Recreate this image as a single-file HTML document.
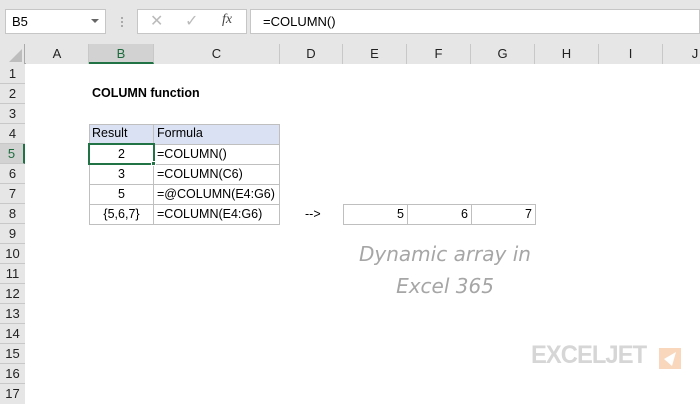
<!DOCTYPE html>
<html><head><style>
*{margin:0;padding:0;box-sizing:border-box}
body{width:700px;height:400px;overflow:hidden;background:#fff;font-family:"Liberation Sans",Calibri,sans-serif;font-size:12.5px;color:#000;position:relative}
.a{position:absolute}
.hdr{position:absolute;background:#e6e6e6;color:#222;text-align:center;font-size:13px}
.cell{position:absolute;height:20px;line-height:19px;padding:0 3px;white-space:nowrap}
</style></head><body>
<div class="a" style="left:0;top:0;width:700px;height:44px;background:#e6e6e6"></div>
<div class="a" style="left:5px;top:9px;width:101px;height:25px;background:#fff;border:1px solid #c6c6c6;padding:4px 6px;font-size:13px">B5</div>
<div class="a" style="left:91px;top:19px;width:0;height:0;border-left:4px solid transparent;border-right:4px solid transparent;border-top:4px solid #666"></div>
<div class="a" style="left:121px;top:17px;width:2px;height:2px;background:#aaa;box-shadow:0 4px #aaa,0 8px #aaa"></div>
<div class="a" style="left:137px;top:9px;width:110px;height:25px;background:#fff;border:1px solid #c6c6c6"></div>
<div class="a" style="left:150px;top:11px;font-size:16px;color:#bbb">✕</div>
<div class="a" style="left:185px;top:11px;font-size:16px;color:#bbb">✓</div>
<div class="a" style="left:222px;top:12px;font-size:14px;font-style:italic;font-family:'Liberation Serif',serif;color:#444">fx</div>
<div class="a" style="left:250px;top:9px;width:450px;height:25px;background:#fff;border:1px solid #c6c6c6;padding:4px 12px;font-size:13px">=COLUMN()</div>

<div class="a" style="left:0;top:44px;width:700px;height:20px;background:#e6e6e6;border-bottom:1px solid #aaa"></div>
<div class="a" style="left:0;top:44px;width:25px;height:356px;background:#e6e6e6;border-right:1px solid #aaa"></div>
<div class="a" style="left:9px;top:49px;width:0;height:0;border-left:13px solid transparent;border-bottom:13px solid #bdbdbd"></div>
<div class="hdr" style="left:26px;top:44px;width:63px;height:20px;line-height:20px;border-right:1px solid #c8c8c8">A</div>
<div class="hdr" style="left:89px;top:44px;width:65px;height:20px;line-height:20px;border-right:1px solid #c8c8c8;background:#d2d2d2;color:#1e6b3e;border-bottom:2px solid #217346">B</div>
<div class="hdr" style="left:154px;top:44px;width:126px;height:20px;line-height:20px;border-right:1px solid #c8c8c8">C</div>
<div class="hdr" style="left:280px;top:44px;width:63px;height:20px;line-height:20px;border-right:1px solid #c8c8c8">D</div>
<div class="hdr" style="left:343px;top:44px;width:64px;height:20px;line-height:20px;border-right:1px solid #c8c8c8">E</div>
<div class="hdr" style="left:407px;top:44px;width:64px;height:20px;line-height:20px;border-right:1px solid #c8c8c8">F</div>
<div class="hdr" style="left:471px;top:44px;width:64px;height:20px;line-height:20px;border-right:1px solid #c8c8c8">G</div>
<div class="hdr" style="left:535px;top:44px;width:64px;height:20px;line-height:20px;border-right:1px solid #c8c8c8">H</div>
<div class="hdr" style="left:599px;top:44px;width:64px;height:20px;line-height:20px;border-right:1px solid #c8c8c8">I</div>
<div class="hdr" style="left:663px;top:44px;width:64px;height:20px;line-height:20px">J</div>

<div class="hdr" style="left:0;top:64px;width:25px;height:20px;line-height:20px;border-bottom:1px solid #c8c8c8">1</div>
<div class="hdr" style="left:0;top:84px;width:25px;height:20px;line-height:20px;border-bottom:1px solid #c8c8c8">2</div>
<div class="hdr" style="left:0;top:104px;width:25px;height:20px;line-height:20px;border-bottom:1px solid #c8c8c8">3</div>
<div class="hdr" style="left:0;top:124px;width:25px;height:20px;line-height:20px;border-bottom:1px solid #c8c8c8">4</div>
<div class="hdr" style="left:0;top:144px;width:25px;height:20px;line-height:20px;border-bottom:1px solid #c8c8c8;background:#d2d2d2;color:#1e6b3e;border-right:2px solid #217346">5</div>
<div class="hdr" style="left:0;top:164px;width:25px;height:20px;line-height:20px;border-bottom:1px solid #c8c8c8">6</div>
<div class="hdr" style="left:0;top:184px;width:25px;height:20px;line-height:20px;border-bottom:1px solid #c8c8c8">7</div>
<div class="hdr" style="left:0;top:204px;width:25px;height:20px;line-height:20px;border-bottom:1px solid #c8c8c8">8</div>
<div class="hdr" style="left:0;top:224px;width:25px;height:20px;line-height:20px;border-bottom:1px solid #c8c8c8">9</div>
<div class="hdr" style="left:0;top:244px;width:25px;height:20px;line-height:20px;border-bottom:1px solid #c8c8c8">10</div>
<div class="hdr" style="left:0;top:264px;width:25px;height:20px;line-height:20px;border-bottom:1px solid #c8c8c8">11</div>
<div class="hdr" style="left:0;top:284px;width:25px;height:20px;line-height:20px;border-bottom:1px solid #c8c8c8">12</div>
<div class="hdr" style="left:0;top:304px;width:25px;height:20px;line-height:20px;border-bottom:1px solid #c8c8c8">13</div>
<div class="hdr" style="left:0;top:324px;width:25px;height:20px;line-height:20px;border-bottom:1px solid #c8c8c8">14</div>
<div class="hdr" style="left:0;top:344px;width:25px;height:20px;line-height:20px;border-bottom:1px solid #c8c8c8">15</div>
<div class="hdr" style="left:0;top:364px;width:25px;height:20px;line-height:20px;border-bottom:1px solid #c8c8c8">16</div>
<div class="hdr" style="left:0;top:384px;width:25px;height:20px;line-height:20px">17</div>

<div class="cell" style="left:89px;top:84px;font-weight:bold">COLUMN function</div>

<div class="a" style="left:89px;top:124px;width:191px;height:101px;border:1px solid #bfbfbf"></div>
<div class="a" style="left:90px;top:125px;width:189px;height:19px;background:#d9e1f2"></div>
<div class="a" style="left:153px;top:124px;width:1px;height:100px;background:#bfbfbf"></div>
<div class="a" style="left:89px;top:144px;width:191px;height:1px;background:#bfbfbf"></div>
<div class="a" style="left:89px;top:164px;width:191px;height:1px;background:#bfbfbf"></div>
<div class="a" style="left:89px;top:184px;width:191px;height:1px;background:#bfbfbf"></div>
<div class="a" style="left:89px;top:204px;width:191px;height:1px;background:#bfbfbf"></div>
<div class="cell" style="left:89px;top:124px">Result</div>
<div class="cell" style="left:154px;top:124px">Formula</div>
<div class="cell" style="left:89px;top:145px;width:65px;text-align:center">2</div>
<div class="cell" style="left:89px;top:165px;width:65px;text-align:center">3</div>
<div class="cell" style="left:89px;top:185px;width:65px;text-align:center">5</div>
<div class="cell" style="left:89px;top:205px;width:65px;text-align:center">{5,6,7}</div>
<div class="cell" style="left:154px;top:145px">=COLUMN()</div>
<div class="cell" style="left:154px;top:165px">=COLUMN(C6)</div>
<div class="cell" style="left:154px;top:185px">=@COLUMN(E4:G6)</div>
<div class="cell" style="left:154px;top:205px">=COLUMN(E4:G6)</div>
<div class="a" style="left:88px;top:143px;width:67px;height:22px;border:2px solid #217346"></div>
<div class="a" style="left:151px;top:161px;width:5px;height:5px;background:#217346;border:1px solid #fff"></div>

<div class="cell" style="left:302px;top:205px">--&gt;</div>
<div class="a" style="left:343px;top:204px;width:193px;height:21px;border:1px solid #bfbfbf"></div>
<div class="a" style="left:407px;top:204px;width:1px;height:20px;background:#bfbfbf"></div>
<div class="a" style="left:471px;top:204px;width:1px;height:20px;background:#bfbfbf"></div>
<div class="cell" style="left:343px;top:205px;width:64px;text-align:right">5</div>
<div class="cell" style="left:407px;top:205px;width:64px;text-align:right">6</div>
<div class="cell" style="left:471px;top:205px;width:64px;text-align:right">7</div>

<div class="a" style="left:340px;top:238px;width:210px;text-align:center;font-family:'Comic Sans MS','DejaVu Sans',cursive;font-style:italic;font-size:20px;color:#a6a6a6;line-height:32px">Dynamic array in<br>Excel 365</div>

<div class="a" style="left:531px;top:341px;font-family:'Liberation Sans',sans-serif;font-weight:bold;font-size:25px;letter-spacing:-1px;color:#d6d6d6;transform:scaleX(0.95);transform-origin:left">EXCELJET</div>
<svg class="a" style="left:659px;top:348px" width="22" height="21" viewBox="0 0 22 21"><rect width="22" height="21" fill="#f8d7bd"/><polygon points="5,11 17,4 13,18" fill="#fff"/></svg>
</body></html>
